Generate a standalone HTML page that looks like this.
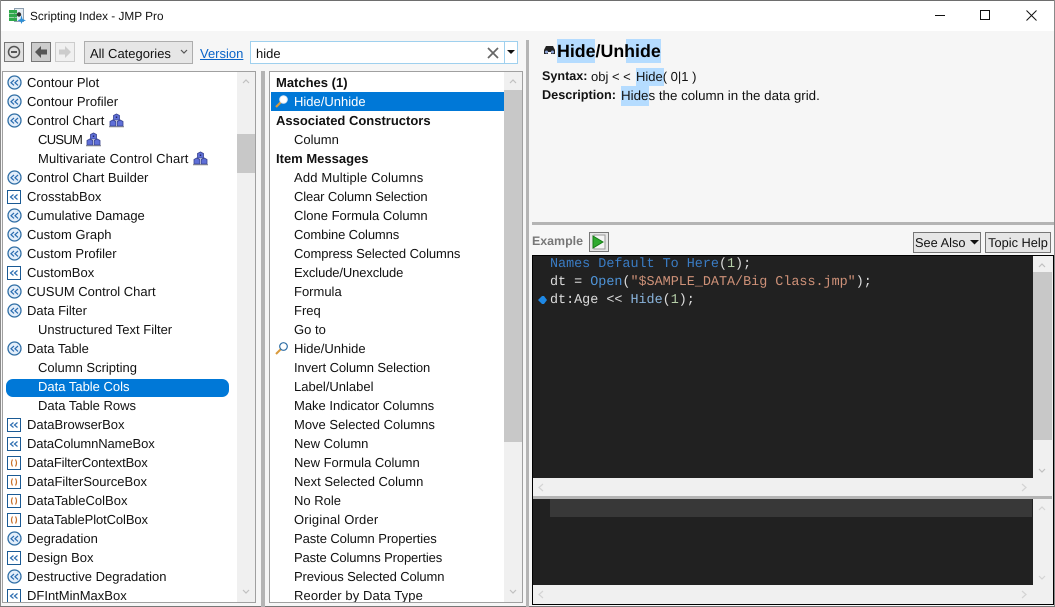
<!DOCTYPE html>
<html>
<head>
<meta charset="utf-8">
<title>Scripting Index - JMP Pro</title>
<style>
html,body{margin:0;padding:0}
body{width:1055px;height:607px;position:relative;overflow:hidden;background:#f6f6f6;font-family:"Liberation Sans",sans-serif;font-size:13px;color:#111;text-rendering:geometricPrecision}
.a{position:absolute}
.t{position:absolute;white-space:nowrap;line-height:19px}
.list{position:absolute;overflow:hidden;background:#fff}
.r{height:19px;line-height:19px;white-space:nowrap;position:relative}
.l .r{padding-left:24px}
.l .r.i{padding-left:35px}
.m .r{padding-left:23px}
.m .r.b{padding-left:5px;font-weight:bold}
.r svg{position:absolute}
.code{position:absolute;left:550px;font-family:"Liberation Mono",monospace;font-size:13.42px;line-height:18px;white-space:pre;color:#dcdcdc}
.btn{position:absolute;box-sizing:border-box;border:1px solid #777;background:#e6e6e6;text-align:center;line-height:20px;font-size:12.8px}
</style>
</head>
<body>
<svg width="0" height="0" style="position:absolute">
<defs>
<g id="c"><circle cx="7.5" cy="7.5" r="6.5" fill="#e3eefa" stroke="#2f6ea5" stroke-width="1.3"/><path d="M7 5 4 7.7 7 10.4M11 5 8 7.7 11 10.4" fill="none" stroke="#2a6cb0" stroke-width="1.2"/></g>
<g id="x"><rect x=".5" y=".5" width="13" height="13" fill="#fff" stroke="#1a5a94"/><path d="M6.5 4.5 3.5 7 6.5 9.5M10.5 4.5 7.5 7 10.5 9.5" fill="none" stroke="#2a6cb0" stroke-width="1.2"/></g>
<g id="p"><rect x=".5" y=".5" width="13" height="13" fill="#fff" stroke="#1a5a94"/><path d="M5.5 3.5Q3.5 7 5.5 10.500M8.5 3.5Q10.500 7 8.5 10.500" fill="none" stroke="#c8702a" stroke-width="1.2"/></g>
<g id="q"><rect x="0" y="13" width="15" height="1.3" fill="#999"/><path d="M4.500 2.500 7.500 1 10.500 2.500V7H4.500Z" fill="#5f6fd8" stroke="#3a4590" stroke-width=".8"/><path d="M1 8.500 3.800 7 6.800 8.500V13H1Z" fill="#5f6fd8" stroke="#3a4590" stroke-width=".8"/><path d="M8.200 8.500 11.200 7 14 8.500V13H8.200Z" fill="#5f6fd8" stroke="#3a4590" stroke-width=".8"/><rect x="6.800" y="3.500" width="1.400" height="1.400" fill="#1c2350"/></g>
</defs>
</svg>

<!-- window frame / title -->
<div class="a" style="left:0;top:0;width:1055px;height:31px;background:#fff"></div>
<div class="a" style="left:0;top:0;width:1055px;height:1px;background:#6e6e6e"></div>
<div class="a" style="left:0;top:0;width:1px;height:607px;background:#8a8a8a"></div>
<div class="a" style="left:1054px;top:0;width:1px;height:607px;background:#8a8a8a"></div>
<div class="a" style="left:0;top:606px;width:1055px;height:1px;background:#777"></div>

<svg class="a" style="left:9px;top:7px" width="17" height="17" viewBox="0 0 17 17">
<rect x="5.500" y="1.500" width="9" height="13" fill="#e6edf3" stroke="#8fa0b0"/>
<rect x="0" y="3" width="8" height="3.500" fill="#2fa84a"/><rect x="0" y="7" width="8" height="3.500" fill="#2fa84a"/><rect x="0" y="11" width="8" height="3" fill="#2fa84a"/>
<circle cx="10" cy="7.500" r="2.200" fill="#333"/>
<path d="M12.500 8 13.500 12 17 13.500 13.500 14.500 12.500 17 11.500 14.500 8.500 13.500 11.500 12Z" fill="#2b8fd8"/>
</svg>
<div class="t" style="left:30px;top:7px;font-size:11.8px">Scripting Index - JMP Pro</div>

<div class="a" style="left:935px;top:15px;width:10px;height:1px;background:#111"></div>
<div class="a" style="left:980px;top:10px;width:10px;height:10px;box-sizing:border-box;border:1px solid #111"></div>
<svg class="a" style="left:1026px;top:10px" width="11" height="11"><path d="M.5.5 10.500 10.500M10.500.5.5 10.500" stroke="#111" stroke-width="1" fill="none"/></svg>

<!-- toolbar -->
<div class="a" style="left:4px;top:42px;width:20px;height:20px;box-sizing:border-box;border:1px solid #777;background:#e1e1e1"></div>
<svg class="a" style="left:7px;top:45px" width="14" height="14"><circle cx="7" cy="7" r="5.500" fill="none" stroke="#555" stroke-width="1.500"/><rect x="4" y="6" width="6" height="2" fill="#555"/></svg>
<div class="a" style="left:31px;top:42px;width:20px;height:20px;box-sizing:border-box;border:1px solid #777;background:#ccc"></div>
<svg class="a" style="left:34px;top:45px" width="14" height="14"><path d="M1 7 7 1V4.500H13V9.500H7V13Z" fill="#555"/></svg>
<div class="a" style="left:55px;top:42px;width:20px;height:20px;box-sizing:border-box;border:1px solid #ccc;background:#f0f0f0"></div>
<svg class="a" style="left:58px;top:45px" width="14" height="14"><path d="M13 7 7 1V4.500H1V9.500H7V13Z" fill="#ccc"/></svg>
<div class="a" style="left:84px;top:41px;width:109px;height:23px;box-sizing:border-box;border:1px solid #adadad;background:#e6e6e6"></div>
<div class="t" style="left:90px;top:44px">All Categories</div>
<svg class="a" style="left:180px;top:49px" width="8" height="6"><path d="M1 1 4 4 7 1" fill="none" stroke="#555" stroke-width="1.200"/></svg>
<div class="t" style="left:200px;top:44px;color:#0a64c8;text-decoration:underline">Version</div>
<div class="a" style="left:250px;top:41px;width:268px;height:23px;box-sizing:border-box;border:1px solid #9fd0ee;background:#fff"></div>
<div class="a" style="left:504px;top:42px;width:1px;height:21px;background:#9fd0ee"></div>
<div class="t" style="left:256px;top:44px">hide</div>
<svg class="a" style="left:487px;top:47px" width="12" height="12"><path d="M1 1 11 11M11 1 1 11" stroke="#666" stroke-width="1.700" fill="none"/></svg>
<svg class="a" style="left:507px;top:50px" width="9" height="5"><path d="M0 0H8L4 4Z" fill="#111"/></svg>

<!-- left list -->
<div class="a" style="left:2px;top:71px;width:254px;height:532px;box-sizing:border-box;border:1px solid #a0a0a0;background:#fff"></div>
<div class="a" style="left:237px;top:72px;width:18px;height:530px;background:#f0f0f0"></div>
<div class="a" style="left:237px;top:134px;width:18px;height:39px;background:#c8c8c8"></div>
<svg class="a" style="left:242px;top:78px" width="8" height="6"><path d="M1 5 4 2 7 5" fill="none" stroke="#c0c0c0" stroke-width="1.200"/></svg>
<svg class="a" style="left:242px;top:589px" width="8" height="6"><path d="M1 1 4 4 7 1" fill="none" stroke="#c0c0c0" stroke-width="1.200"/></svg>
<div class="a" style="left:6px;top:379px;width:223px;height:18px;border-radius:7px;background:#0078d7"></div>
<div class="list l" style="left:3px;top:73px;width:234px;height:529px;background:transparent">
<div class="r"><svg style="left:4px;top:2px" width="15" height="15"><use href="#c"/></svg>Contour Plot</div>
<div class="r"><svg style="left:4px;top:2px" width="15" height="15"><use href="#c"/></svg>Contour Profiler</div>
<div class="r"><svg style="left:4px;top:2px" width="15" height="15"><use href="#c"/></svg>Control Chart<svg style="left:106px;top:2px" width="15" height="15"><use href="#q"/></svg></div>
<div class="r i"><span style="letter-spacing:-.7px">CUSUM</span><svg style="left:83px;top:2px" width="15" height="15"><use href="#q"/></svg></div>
<div class="r i"><span style="letter-spacing:.12px">Multivariate Control Chart</span><svg style="left:190px;top:2px" width="15" height="15"><use href="#q"/></svg></div>
<div class="r"><svg style="left:4px;top:2px" width="15" height="15"><use href="#c"/></svg>Control Chart Builder</div>
<div class="r"><svg style="left:4px;top:3px" width="14" height="14"><use href="#x"/></svg>CrosstabBox</div>
<div class="r"><svg style="left:4px;top:2px" width="15" height="15"><use href="#c"/></svg>Cumulative Damage</div>
<div class="r"><svg style="left:4px;top:2px" width="15" height="15"><use href="#c"/></svg>Custom Graph</div>
<div class="r"><svg style="left:4px;top:2px" width="15" height="15"><use href="#c"/></svg>Custom Profiler</div>
<div class="r"><svg style="left:4px;top:3px" width="14" height="14"><use href="#x"/></svg>CustomBox</div>
<div class="r"><svg style="left:4px;top:2px" width="15" height="15"><use href="#c"/></svg>CUSUM Control Chart</div>
<div class="r"><svg style="left:4px;top:2px" width="15" height="15"><use href="#c"/></svg>Data Filter</div>
<div class="r i">Unstructured Text Filter</div>
<div class="r"><svg style="left:4px;top:2px" width="15" height="15"><use href="#c"/></svg>Data Table</div>
<div class="r i">Column Scripting</div>
<div class="r i" style="color:#fff">Data Table Cols</div>
<div class="r i">Data Table Rows</div>
<div class="r"><svg style="left:4px;top:3px" width="14" height="14"><use href="#x"/></svg>DataBrowserBox</div>
<div class="r"><svg style="left:4px;top:3px" width="14" height="14"><use href="#x"/></svg><span style="letter-spacing:-.1px">DataColumnNameBox</span></div>
<div class="r"><svg style="left:4px;top:3px" width="14" height="14"><use href="#p"/></svg><span style="letter-spacing:-.15px">DataFilterContextBox</span></div>
<div class="r"><svg style="left:4px;top:3px" width="14" height="14"><use href="#p"/></svg>DataFilterSourceBox</div>
<div class="r"><svg style="left:4px;top:3px" width="14" height="14"><use href="#p"/></svg>DataTableColBox</div>
<div class="r"><svg style="left:4px;top:3px" width="14" height="14"><use href="#p"/></svg><span style="letter-spacing:-.1px">DataTablePlotColBox</span></div>
<div class="r"><svg style="left:4px;top:2px" width="15" height="15"><use href="#c"/></svg>Degradation</div>
<div class="r"><svg style="left:4px;top:3px" width="14" height="14"><use href="#x"/></svg>Design Box</div>
<div class="r"><svg style="left:4px;top:2px" width="15" height="15"><use href="#c"/></svg>Destructive Degradation</div>
<div class="r"><svg style="left:4px;top:3px" width="14" height="14"><use href="#x"/></svg>DFIntMinMaxBox</div>
</div>

<!-- splitter -->
<div class="a" style="left:261px;top:71px;width:4px;height:536px;background:#b4b4b4"></div>

<!-- middle list -->
<div class="a" style="left:269px;top:71px;width:254px;height:532px;box-sizing:border-box;border:1px solid #a0a0a0;background:#fff"></div>
<div class="a" style="left:504px;top:72px;width:18px;height:530px;background:#f0f0f0"></div>
<div class="a" style="left:504px;top:90px;width:18px;height:352px;background:#c8c8c8"></div>
<svg class="a" style="left:509px;top:78px" width="8" height="6"><path d="M1 5 4 2 7 5" fill="none" stroke="#c0c0c0" stroke-width="1.200"/></svg>
<svg class="a" style="left:509px;top:589px" width="8" height="6"><path d="M1 1 4 4 7 1" fill="none" stroke="#c0c0c0" stroke-width="1.200"/></svg>
<div class="a" style="left:271px;top:92px;width:233px;height:19px;background:#0078d7"></div>
<div class="list m" style="left:271px;top:73px;width:233px;height:529px;background:transparent">
<div class="r b">Matches (1)</div>
<div class="r" style="color:#fff"><svg style="left:3px;top:2px" width="15" height="15"><path d="M2 13 7 8" stroke="#d99a3c" stroke-width="2.200"/><circle cx="9.500" cy="5.500" r="3.800" fill="#fff" stroke="#dfe9f5"/></svg>Hide/Unhide</div>
<div class="r b">Associated Constructors</div>
<div class="r">Column</div>
<div class="r b">Item Messages</div>
<div class="r"><span style="letter-spacing:.15px">Add Multiple Columns</span></div>
<div class="r"><span style="letter-spacing:-.14px">Clear Column Selection</span></div>
<div class="r">Clone Formula Column</div>
<div class="r"><span style="letter-spacing:-.12px">Combine Columns</span></div>
<div class="r"><span style="letter-spacing:-.08px">Compress Selected Columns</span></div>
<div class="r"><span style="letter-spacing:-.12px">Exclude/Unexclude</span></div>
<div class="r">Formula</div>
<div class="r">Freq</div>
<div class="r">Go to</div>
<div class="r"><svg style="left:3px;top:2px" width="15" height="15"><path d="M2 13 7 8" stroke="#d99a3c" stroke-width="2"/><circle cx="9.500" cy="5.500" r="3.800" fill="#fff" stroke="#2f6ea5" stroke-width="1.200"/></svg>Hide/Unhide</div>
<div class="r"><span style="letter-spacing:-.08px">Invert Column Selection</span></div>
<div class="r">Label/Unlabel</div>
<div class="r">Make Indicator Columns</div>
<div class="r">Move Selected Columns</div>
<div class="r">New Column</div>
<div class="r">New Formula Column</div>
<div class="r">Next Selected Column</div>
<div class="r">No Role</div>
<div class="r"><span style="letter-spacing:.2px">Original Order</span></div>
<div class="r"><span style="letter-spacing:-.08px">Paste Column Properties</span></div>
<div class="r"><span style="letter-spacing:-.12px">Paste Columns Properties</span></div>
<div class="r"><span style="letter-spacing:-.12px">Previous Selected Column</span></div>
<div class="r"><span style="letter-spacing:.1px">Reorder by Data Type</span></div>
</div>

<!-- right pane -->
<div class="a" style="left:526px;top:40px;width:3px;height:567px;background:#b4b4b4"></div>
<div class="a" style="left:557px;top:39px;width:38px;height:24px;background:#b5dcff"></div>
<div class="a" style="left:626px;top:39px;width:35px;height:24px;background:#b5dcff"></div>
<div class="a" style="left:636px;top:68px;width:28px;height:18px;background:#b5dcff"></div>
<div class="a" style="left:621px;top:86px;width:28px;height:20px;background:#b5dcff"></div>
<svg class="a" style="left:543px;top:45px" width="13" height="11" viewBox="0 0 13 11"><path d="M3 1H10L12 5V9H8V7H5V9H1V5Z" fill="#222"/><circle cx="3.500" cy="7" r="1.500" fill="#8fa6d8"/><circle cx="9.500" cy="7" r="1.500" fill="#8fa6d8"/></svg>
<div class="t" style="left:557px;top:41px;font-size:17.8px;font-weight:bold;line-height:21px;color:#000">Hide/Unhide</div>
<div class="t" style="left:542px;top:67px;font-weight:bold;font-size:12.6px">Syntax:</div>
<div class="t" style="left:591px;top:67px;font-size:13px;white-space:pre">obj &lt; &lt;</div>
<div class="t" style="left:636px;top:67px;font-size:13px">Hide( 0|1 )</div>
<div class="t" style="left:542px;top:86px;font-weight:bold;font-size:12.7px">Description:</div>
<div class="t" style="left:621px;top:86px;font-size:13.35px">Hides the column in the data grid.</div>

<div class="a" style="left:532px;top:222px;width:522px;height:3px;background:#b4b4b4"></div>
<div class="t" style="left:532px;top:232px;font-weight:bold;font-size:12.4px;color:#777">Example</div>
<div class="a" style="left:589px;top:232px;width:20px;height:20px;box-sizing:border-box;border:1px solid #777;background:#e6e6e6"></div>
<svg class="a" style="left:591px;top:234px" width="16" height="16"><rect x="3" y="1" width="11" height="14" fill="#f4f4f4" stroke="#999"/><path d="M2 2 12 8 2 14Z" fill="#2faa2f" stroke="#167a16"/></svg>
<div class="btn" style="left:913px;top:232px;width:68px;height:21px;text-align:left;padding-left:1px">See Also</div>
<svg class="a" style="left:970px;top:240px" width="9" height="5"><path d="M0 0H9L4.500 4.500Z" fill="#111"/></svg>
<div class="btn" style="left:985px;top:232px;width:66px;height:21px;white-space:nowrap;overflow:hidden">Topic Help</div>

<!-- code panel -->
<div class="a" style="left:532px;top:255px;width:522px;height:350px;box-sizing:border-box;border:1px solid #000;background:#f0f0f0"></div>
<div class="a" style="left:533px;top:256px;width:500px;height:222px;background:#212121"></div>
<div class="a" style="left:1033px;top:256px;width:19px;height:222px;background:#f0f0f0"></div>
<div class="a" style="left:1033px;top:272px;width:19px;height:168px;background:#c8c8c8"></div>
<svg class="a" style="left:1038px;top:262px" width="8" height="6"><path d="M1 5 4 2 7 5" fill="none" stroke="#c0c0c0" stroke-width="1.200"/></svg>
<svg class="a" style="left:1038px;top:468px" width="8" height="6"><path d="M1 1 4 4 7 1" fill="none" stroke="#c0c0c0" stroke-width="1.200"/></svg>
<svg class="a" style="left:538px;top:483px" width="6" height="9"><path d="M5 1 1 4.500 5 8" fill="none" stroke="#d4d4d4" stroke-width="1.200"/></svg>
<svg class="a" style="left:1021px;top:483px" width="6" height="9"><path d="M1 1 5 4.500 1 8" fill="none" stroke="#d4d4d4" stroke-width="1.200"/></svg>
<div class="a" style="left:533px;top:496px;width:519px;height:3px;background:#b4b4b4"></div>
<div class="a" style="left:533px;top:499px;width:500px;height:86px;background:#212121"></div>
<div class="a" style="left:550px;top:499px;width:482px;height:18px;background:#383838"></div>
<svg class="a" style="left:1038px;top:505px" width="8" height="6"><path d="M1 5 4 2 7 5" fill="none" stroke="#d4d4d4" stroke-width="1.200"/></svg>
<svg class="a" style="left:1038px;top:575px" width="8" height="6"><path d="M1 1 4 4 7 1" fill="none" stroke="#d4d4d4" stroke-width="1.200"/></svg>
<svg class="a" style="left:538px;top:590px" width="6" height="9"><path d="M5 1 1 4.500 5 8" fill="none" stroke="#d4d4d4" stroke-width="1.200"/></svg>
<svg class="a" style="left:1021px;top:590px" width="6" height="9"><path d="M1 1 5 4.500 1 8" fill="none" stroke="#d4d4d4" stroke-width="1.200"/></svg>

<div class="code" style="top:254px;margin-top:2px"><span style="color:#3a7cc4">Names Default To Here</span>(<span style="color:#b5cea8">1</span>);</div>
<div class="code" style="top:272px;margin-top:2px">dt = <span style="color:#4f94d8">Open</span>(<span style="color:#ce9178">"$SAMPLE_DATA/Big Class.jmp"</span>);</div>
<div class="code" style="top:290px;margin-top:2px">dt:Age &lt;&lt; <span style="color:#8ab4dc">Hide</span>(<span style="color:#b5cea8">1</span>);</div>
<svg class="a" style="left:538px;top:295px" width="10" height="10"><path d="M0 5 4 1H6L9 5 6 9H4Z" fill="#1e88e5"/></svg>
</body>
</html>
